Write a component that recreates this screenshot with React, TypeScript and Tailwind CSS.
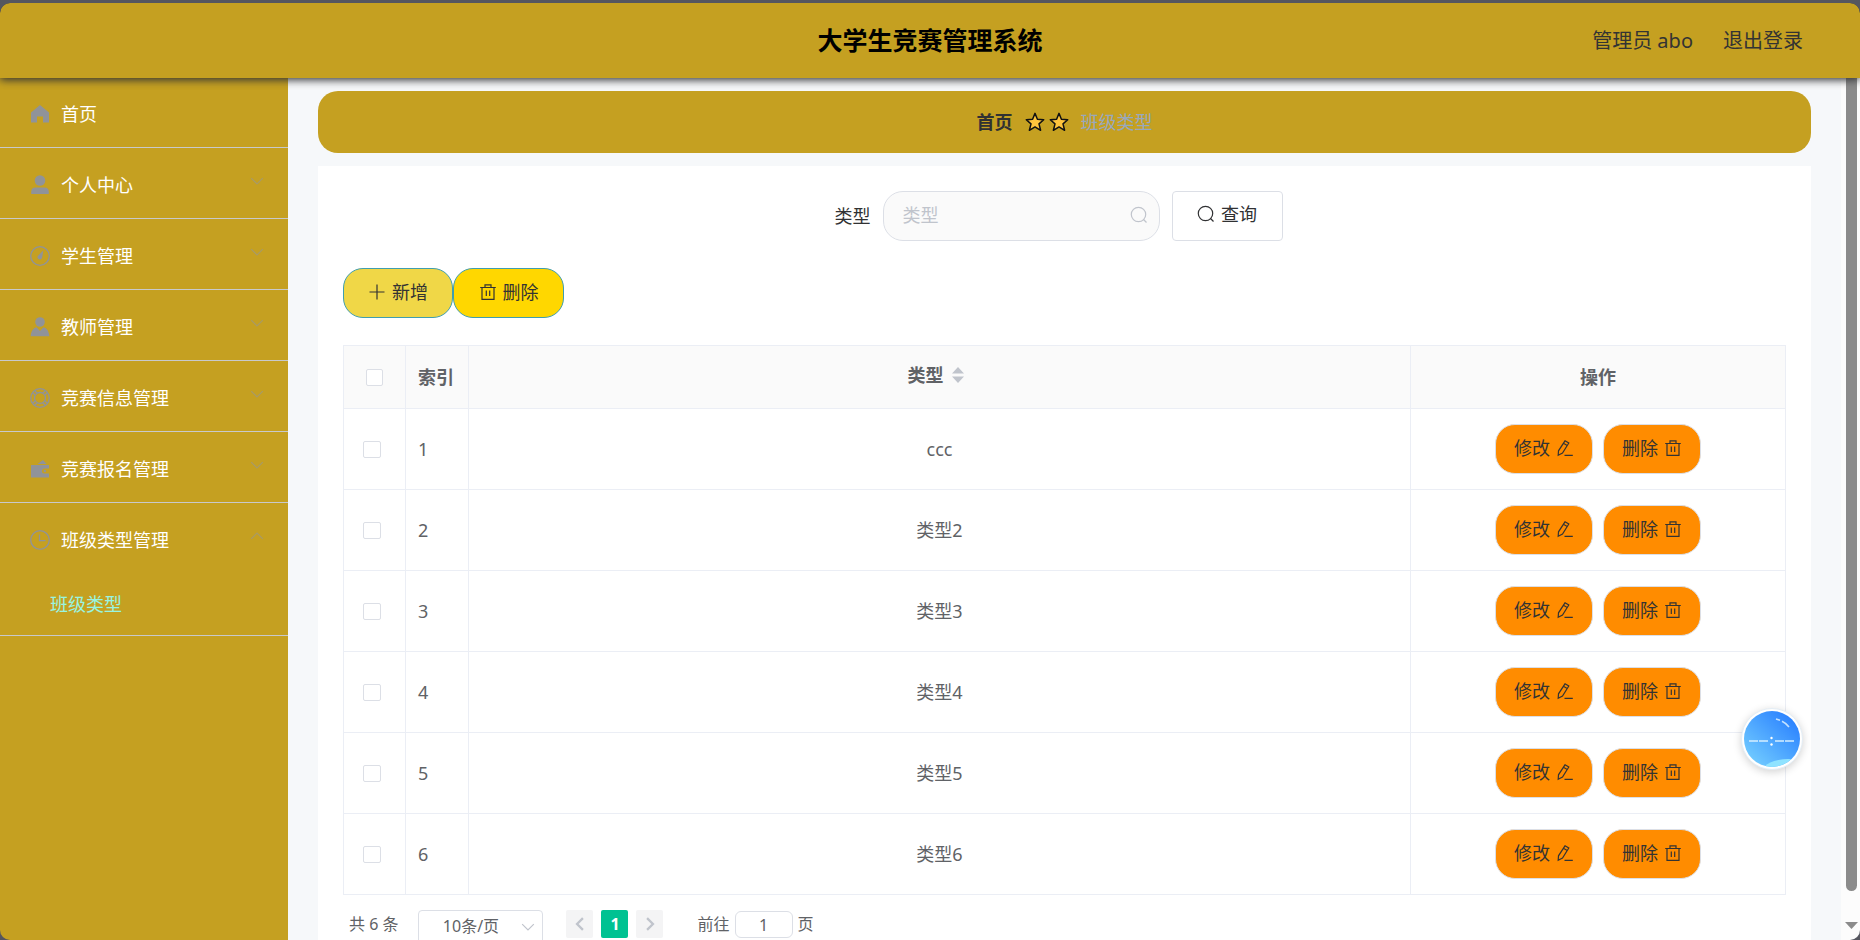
import React, { useState } from "react";

interface IconProps {
  className?: string;
}

interface MenuEntry {
  label: string;
  icon: React.ReactNode;
  children?: string[];
}

const FONT = "font-['Noto_Sans','Noto_Sans_CJK_SC',sans-serif]";

function HomeIcon() {
  return (
    <svg viewBox="0 0 20 20" className="h-5 w-5 shrink-0" fill="currentColor">
      <path d="M10 1 L19 8.5 V18.5 H13 V12.5 H7 V18.5 H1 V8.5 Z" />
    </svg>
  );
}

function UserIcon() {
  return (
    <svg viewBox="0 0 20 20" className="h-5 w-5 shrink-0" fill="currentColor">
      <circle cx="10" cy="5.5" r="5.3" />
      <path d="M1.2 19 V16.5 C1.2 14 3 12.5 5.5 12.5 H14.5 C17 12.5 18.8 14 18.8 16.5 V19 Z" />
    </svg>
  );
}

function TeacherIcon() {
  return (
    <svg viewBox="0 0 20 20" className="h-5 w-5 shrink-0" fill="currentColor">
      <circle cx="10" cy="5" r="4.8" />
      <path d="M6.5 10.3 L10 14 L13.5 10.3 C17 11.2 19 14.5 19.3 19.2 H0.7 C1 14.5 3 11.2 6.5 10.3 Z" />
    </svg>
  );
}

function CompassIcon() {
  return (
    <svg viewBox="0 0 20 20" className="h-5 w-5 shrink-0" fill="none" stroke="currentColor">
      <circle cx="10" cy="10" r="9.3" strokeWidth="1.3" />
      <path d="M13.4 4.2 L12.2 11.4 C11.8 13.2 10 14 8.6 13.1 C7.2 12.2 7.1 10.6 8.1 9.7 Z" fill="currentColor" stroke="none" />
    </svg>
  );
}

function HelpIcon() {
  return (
    <svg viewBox="0 0 20 20" className="h-5 w-5 shrink-0" fill="none" stroke="currentColor" strokeWidth="1.3">
      <circle cx="10" cy="10" r="9.3" />
      <circle cx="10" cy="10" r="5.5" />
      <path d="M5.2 7.3 L2.7 4.8 M7.3 5.2 L4.8 2.7 M12.7 5.2 L15.2 2.7 M14.8 7.3 L17.3 4.8 M14.8 12.7 L17.3 15.2 M12.7 14.8 L15.2 17.3 M7.3 14.8 L4.8 17.3 M5.2 12.7 L2.7 15.2" />
    </svg>
  );
}

function WalletIcon() {
  return (
    <svg viewBox="0 0 20 20" className="h-5 w-5 shrink-0" fill="currentColor">
      <path d="M7.5 5 L13 1 L16.5 5 Z" />
      <path d="M1 6 H19 V9.5 H14.5 A2.5 2.5 0 0 0 14.5 14.5 H19 V18.5 H1 Z" />
      <circle cx="14.8" cy="12" r="1.2" />
    </svg>
  );
}

function ClockIcon() {
  return (
    <svg viewBox="0 0 20 20" className="h-5 w-5 shrink-0" fill="none" stroke="currentColor" strokeWidth="1.3">
      <circle cx="10" cy="10" r="9.3" />
      <path d="M9.5 4.5 V10.7 H15.5" />
    </svg>
  );
}

function ChevronIcon({ className }: IconProps) {
  return (
    <svg viewBox="0 0 12 12" className={className} fill="none" stroke="currentColor">
      <path d="M1 3.5 L6 8.5 L11 3.5" />
    </svg>
  );
}

function SearchIcon({ className }: IconProps) {
  return (
    <svg viewBox="0 0 18 18" className={className} fill="none" stroke="currentColor" strokeWidth="1.2">
      <circle cx="8.5" cy="8.5" r="7.2" />
      <path d="M13.5 13.5 L16.5 16.5" />
    </svg>
  );
}

function PlusIcon() {
  return (
    <svg viewBox="0 0 18 18" className="h-[18px] w-[18px]" fill="none" stroke="currentColor" strokeWidth="1.2">
      <path d="M9 1.5 V16.5 M1.5 9 H16.5" />
    </svg>
  );
}

function TrashIcon() {
  return (
    <svg viewBox="0 0 18 18" className="h-[18px] w-[18px]" fill="none" stroke="currentColor" strokeWidth="1.2">
      <path d="M1.2 4.5 H16.8 M3 4.5 V16.4 H15 V4.5 M6 4.5 V1.8 H12 V4.5 M7.3 7.5 V13 M10.7 7.5 V13" />
    </svg>
  );
}

function EditIcon() {
  return (
    <svg viewBox="0 0 18 18" className="h-[18px] w-[18px]" fill="none" stroke="currentColor" strokeWidth="1.2">
      <path d="M9 1.8 L12.8 4 L6.5 14 L2.2 16.3 L2.5 11.8 Z M7.4 4.3 L11.3 6.5 M8.5 16.4 H16.8" />
    </svg>
  );
}

function StarIcon() {
  return (
    <svg viewBox="0 0 20 20" className="h-5 w-5" fill="#ffc53d" stroke="#111111" strokeWidth="1.5" strokeLinejoin="round">
      <path d="M10 1.4 L12.4 7.2 L18.7 7.7 L14 11.9 L15.6 18.3 L10 14.9 L4.4 18.3 L6 11.9 L1.3 7.7 L7.6 7.2 Z" />
    </svg>
  );
}

const menu: MenuEntry[] = [
  { label: "个人中心", icon: <UserIcon /> },
  { label: "学生管理", icon: <CompassIcon /> },
  { label: "教师管理", icon: <TeacherIcon /> },
  { label: "竞赛信息管理", icon: <HelpIcon /> },
  { label: "竞赛报名管理", icon: <WalletIcon /> },
  { label: "班级类型管理", icon: <ClockIcon />, children: ["班级类型"] },
];

const rows = ["ccc", "类型2", "类型3", "类型4", "类型5", "类型6"];

function Header() {
  return (
    <header className="relative z-10 grid h-[75px] shrink-0 grid-cols-3 items-center rounded-t-[10px] bg-[#c5a021] px-[57px] pt-px shadow-[0_2px_8px_#303133]">
      <h1 className="col-start-2 text-center text-[25px] font-bold text-black">大学生竞赛管理系统</h1>
      <div className="flex items-center justify-end gap-[30px] text-xl text-[#333333]">
        <span>管理员 abo</span>
        <button type="button" className="cursor-pointer">退出登录</button>
      </div>
    </header>
  );
}

function Sidebar() {
  return (
    <nav className="w-72 shrink-0 bg-[#c5a021] text-lg text-white">
      <a href="#home" className="flex h-[70px] items-center gap-[11px] border-b border-[#c8c9cc] pt-[2px] pl-[30px]">
        <span className="text-[#909399]"><HomeIcon /></span>
        首页
      </a>
      {menu.map(({ label, icon, children }) => (
        <div key={label} className="border-b border-[#c8c9cc]">
          <button type="button" className="flex h-[70px] w-full cursor-pointer items-center gap-[11px] pt-[3px] pr-6 pl-[30px]">
            <span className="text-[#909399]">{icon}</span>
            {label}
            <ChevronIcon
              className={children ? "mb-2 ml-auto h-[14px] w-[14px] rotate-180 text-[#a79a68]" : "mb-2 ml-auto h-[14px] w-[14px] text-[#a79a68]"}
            />
          </button>
          {children?.map((child) => (
            <a key={child} href="#type" className="flex h-[62px] items-center pl-[50px] text-[#98f5e1]">
              {child}
            </a>
          ))}
        </div>
      ))}
    </nav>
  );
}

function Breadcrumb() {
  return (
    <div className="flex h-[62px] items-center justify-center rounded-[20px] bg-[#c5a021] text-lg">
      <a href="#home" className="font-bold text-[#303133]">首页</a>
      <span className="mx-3 flex gap-1">
        <StarIcon />
        <StarIcon />
      </span>
      <span className="text-[#97a8be]">班级类型</span>
    </div>
  );
}

function SearchForm() {
  const [keyword, setKeyword] = useState("");

  return (
    <form className="flex h-[50px] items-center justify-center text-lg" onSubmit={(e) => e.preventDefault()}>
      <label htmlFor="keyword" className="mr-3 text-[#303133]">类型</label>
      <div className="relative mr-3">
        <input
          id="keyword"
          value={keyword}
          onChange={(e) => setKeyword(e.target.value)}
          placeholder="类型"
          className="h-[50px] w-[277px] rounded-[20px] border border-[#dcdfe6] bg-[#fafafa] pr-9 pb-[2px] pl-[19px] placeholder:text-[#c0c4cc]"
        />
        <SearchIcon className="absolute top-[15px] right-3 h-[18px] w-[18px] text-[#c0c4cc]" />
      </div>
      <button type="submit" className="mr-3 flex h-[50px] w-[111px] items-center justify-center gap-[6px] rounded border border-[#dcdfe6] pb-1 text-[#303133]">
        <SearchIcon className="h-[18px] w-[18px]" />
        查询
      </button>
    </form>
  );
}

function DataTable() {
  return (
    <table className="mt-[27px] w-full table-fixed border-collapse border border-[#ebeef5] text-lg text-[#606266]">
      <colgroup>
        <col className="w-[62px]" />
        <col className="w-[63px]" />
        <col />
        <col className="w-[375px]" />
      </colgroup>
      <thead>
        <tr className="h-[63px] bg-[#fafafa]">
          <th className="border border-[#ebeef5]">
            <input type="checkbox" aria-label="全选" className="ml-[22px] block h-[17px] w-[17px] appearance-none rounded-xs border border-[#dcdfe6] bg-white" />
          </th>
          <th className="border border-[#ebeef5] pl-3 text-left font-bold">索引</th>
          <th className="border border-[#ebeef5] pr-2 pb-1 font-bold">
            <span className="inline-flex items-center gap-2">
              类型
              <svg viewBox="0 0 12 16" className="h-4 w-3" fill="#c0c4cc">
                <path d="M6 0 L12 6.5 H0 Z M0 9.5 H12 L6 16 Z" />
              </svg>
            </span>
          </th>
          <th className="border border-[#ebeef5] font-bold">操作</th>
        </tr>
      </thead>
      <tbody>
        {rows.map((name, i) => (
          <tr key={name} className="h-[81px]">
            <td className="border border-[#ebeef5]">
              <input type="checkbox" aria-label={name} className="ml-[19px] block h-[17px] w-[18px] appearance-none rounded-xs border border-[#dcdfe6] bg-white" />
            </td>
            <td className="border border-[#ebeef5] pl-3">{i + 1}</td>
            <td className="border border-[#ebeef5] text-center">{name}</td>
            <td className="border border-[#ebeef5]">
              <div className="flex justify-center gap-[10px] text-[#333333]">
                <button type="button" className="flex h-[50px] w-[98px] items-center justify-center gap-[6px] rounded-[20px] border border-[#dcdfe6] bg-[#ff8c00] pb-[2px]">
                  修改
                  <EditIcon />
                </button>
                <button type="button" className="flex h-[50px] w-[98px] items-center justify-center gap-[6px] rounded-[20px] border border-[#dcdfe6] bg-[#ff8c00] pb-[2px]">
                  删除
                  <TrashIcon />
                </button>
              </div>
            </td>
          </tr>
        ))}
      </tbody>
    </table>
  );
}

function Pagination() {
  return (
    <div className="mt-[15px] flex items-start pl-[6px] text-base leading-7 text-[#606266]">
      <span className="mr-5">共 6 条</span>
      <div className="relative mr-[23px]">
        <select aria-label="每页条数" className="h-[35px] w-[125px] appearance-none rounded border border-[#dcdfe6] pr-5 pb-1 text-center">
          <option>10条/页</option>
        </select>
        <ChevronIcon className="pointer-events-none absolute top-[10px] right-2 h-[14px] w-[14px] text-[#c0c4cc]" />
      </div>
      <div className="mr-[34px] flex gap-2">
        <button type="button" aria-label="上一页" disabled className="flex h-7 w-[27px] items-center justify-center rounded-xs bg-[#f4f4f5] text-[#c0c4cc]">
          <ChevronIcon className="h-[14px] w-[14px] rotate-90 stroke-2" />
        </button>
        <button type="button" className="h-7 w-[27px] rounded-xs bg-[#00c292] font-bold text-white">1</button>
        <button type="button" aria-label="下一页" disabled className="flex h-7 w-[27px] items-center justify-center rounded-xs bg-[#f4f4f5] text-[#c0c4cc]">
          <ChevronIcon className="h-[14px] w-[14px] -rotate-90 stroke-2" />
        </button>
      </div>
      <label htmlFor="page">前往</label>
      <input id="page" defaultValue="1" className="mx-[5px] mt-px h-[27px] w-[58px] rounded-md border border-[#dcdfe6] text-center" />
      <span>页</span>
    </div>
  );
}

function Scrollbar() {
  return (
    <div className="flex w-[19px] shrink-0 flex-col items-center bg-[#fcfcfc] pb-[11px] pl-px">
      <div className="w-[11px] grow rounded-b-md bg-[#8b8b8b]" />
      <svg viewBox="0 0 13 7" className="mt-[31px] h-[7px] w-[13px]" fill="#8b8b8b">
        <path d="M0 0 H13 L6.5 7 Z" />
      </svg>
    </div>
  );
}

function TimerBall() {
  return (
    <div className="fixed right-[57px] bottom-[170px] h-[62px] w-[62px] rounded-full border border-[#e3edf5] bg-white p-[2px] shadow-[0_2px_8px_#0000002e]">
      <svg viewBox="0 0 56 56" className="h-full w-full">
        <defs>
          <linearGradient id="ball" x1="0.1" y1="0.9" x2="0.85" y2="0.1">
            <stop offset="0" stopColor="#72ccff" />
            <stop offset="1" stopColor="#2b82ff" />
          </linearGradient>
          <clipPath id="round">
            <circle cx="28" cy="28" r="28" />
          </clipPath>
        </defs>
        <circle cx="28" cy="28" r="28" fill="url(#ball)" />
        <ellipse cx="44" cy="60" rx="25" ry="12" fill="#8fe3ff" clipPath="url(#round)" />
        <path d="M32 8 L36 9.2 M38 10.2 Q42 12 45 16" fill="none" stroke="#c4e2ff" strokeWidth="1.6" />
        <path d="M5 30 H14 M15 30 H24 M31 30 H40 M41 30 H50" stroke="#d5eeff" strokeWidth="1.6" />
        <circle cx="27.5" cy="27" r="1.2" fill="#ffffff" />
        <circle cx="27.5" cy="33.5" r="1.2" fill="#ffffff" />
      </svg>
    </div>
  );
}

export default function App() {
  return (
    <div className={`${FONT} h-screen overflow-hidden bg-[#55565f] pt-[3px]`}>
      <div className="flex h-full flex-col overflow-hidden rounded-[10px]">
        <Header />
        <div className="flex min-h-0 grow">
          <Sidebar />
          <main className="min-w-0 grow overflow-hidden bg-[#f6f8fa] px-[30px] pt-[13px]">
            <Breadcrumb />
            <section className="mt-[13px] h-full bg-white px-[25px] pt-[25px]">
              <SearchForm />
              <div className="mt-[27px] flex text-lg text-[#333333]">
                <button type="button" className="flex h-[50px] w-[110px] items-center justify-center gap-[6px] rounded-[20px] border border-[#409eaf] bg-[#f0d747] pb-[2px]">
                  <PlusIcon />
                  新增
                </button>
                <button type="button" className="flex h-[50px] w-[111px] items-center justify-center gap-[6px] rounded-[20px] border border-[#409eaf] bg-[#ffd700] pb-[2px]">
                  <TrashIcon />
                  删除
                </button>
              </div>
              <DataTable />
              <Pagination />
            </section>
          </main>
          <Scrollbar />
        </div>
      </div>
      <TimerBall />
    </div>
  );
}
